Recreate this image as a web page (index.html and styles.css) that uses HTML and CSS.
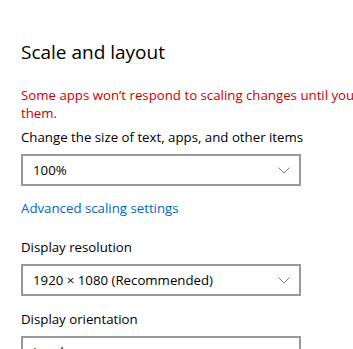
FILE: index.html
```html
<!DOCTYPE html>
<html lang="en">
<head>
    <meta charset="UTF-8">
    <title>Scale and layout</title>
    <link rel="stylesheet" href="styles.css">
</head>
<body>
    <div class="page">
        <h2>Scale and layout</h2>
        <p class="note">Some apps won’t respond to scaling changes until you restart them.</p>

        <div class="field first">
            <label>Change the size of text, apps, and other items</label>
            <div class="select">
                <span>100%</span>
                <svg class="chev" width="12" height="7" viewBox="0 0 12 7"><polyline points="0.5,0.5 6,6 11.5,0.5" fill="none" stroke="#7a7a7a" stroke-width="1"/></svg>
            </div>
        </div>

        <a class="link" href="#">Advanced scaling settings</a>

        <div class="field">
            <label>Display resolution</label>
            <div class="select">
                <span>1920 × 1080 (Recommended)</span>
                <svg class="chev" width="12" height="7" viewBox="0 0 12 7"><polyline points="0.5,0.5 6,6 11.5,0.5" fill="none" stroke="#7a7a7a" stroke-width="1"/></svg>
            </div>
        </div>

        <div class="field last">
            <label>Display orientation</label>
            <div class="select">
                <span>Landscape</span>
                <svg class="chev" width="12" height="7" viewBox="0 0 12 7"><polyline points="0.5,0.5 6,6 11.5,0.5" fill="none" stroke="#7a7a7a" stroke-width="1"/></svg>
            </div>
        </div>
    </div>
</body>
</html>
```

FILE: styles.css
```css
html {
    overflow: hidden;
}
body {
    margin: 0;
    background-color: white;
    font-family: "Open Sans", "Noto Sans", sans-serif;
    font-size: 13.25px;
    color: #000;
}
.page {
    padding: 38px 0 0 21px;
    width: 420px;
}
h2 {
    font-size: 19px;
    font-weight: 400;
    line-height: 28px;
    margin: 0;
}
.note {
    color: #c80000;
    line-height: 18px;
    margin: 20px 0 0 0;
    width: 400px;
}
.field {
    margin-top: 19px;
}
.field.first {
    margin-top: 5px;
}
.field.last {
    margin-top: 13px;
}
label {
    display: block;
    line-height: 20px;
    margin-bottom: 7px;
}
.select {
    box-sizing: border-box;
    width: 280px;
    height: 32px;
    border: 2px solid #999;
    background-color: white;
    display: flex;
    align-items: center;
    justify-content: space-between;
    padding: 0 9px 0 10px;
}
.chev {
    display: block;
}
.link {
    display: block;
    color: #0067c0;
    text-decoration: none;
    line-height: 20px;
    margin-top: 12px;
}
```
